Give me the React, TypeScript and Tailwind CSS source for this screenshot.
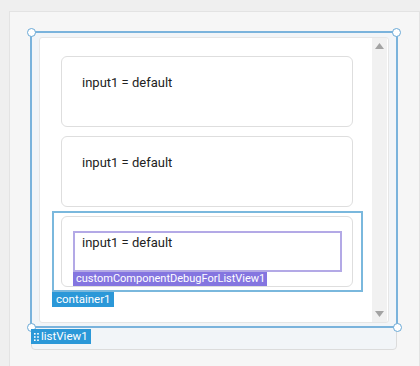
import React from "react";

function Card({ debug }: { debug?: boolean }) {
  return (
    <div className="w-[292px] h-[71px] shrink-0 rounded-md border border-[#dedede] bg-white pt-[14px] pl-[11px]">
      <div
        className={
          "w-[269px] h-[41px] text-[13px] leading-[16px] text-[#222] " +
          (debug ? "border-2 border-[#b3a9e6] pl-[7px] pt-[2px]" : "pl-[9px] pt-[4px]")
        }
      >
        input1 = default
      </div>
      {debug && (
        <div className="w-fit h-[14px] bg-[#8475e0] text-white text-[11px] leading-[14px] pl-[3px] pr-[2px] whitespace-nowrap">
          customComponentDebugForListView1
        </div>
      )}
    </div>
  );
}

function Handle({ x, y }: { x: number; y: number }) {
  return (
    <div
      className="absolute w-[9px] h-[9px] rounded-full bg-white border-[1.5px] border-[#6aa9d6]"
      style={{ left: x - 4.5, top: y - 4.5 }}
    />
  );
}

export default function App() {
  return (
    <div
      className="relative w-[420px] h-[366px] overflow-hidden bg-[#efefef]"
      style={{ fontFamily: "Roboto, 'Noto Sans', sans-serif" }}
    >
      <div className="ml-[9px] mt-[11px] h-[400px] bg-[#f6f6f6] border border-[#e3e3e3] pl-[21px] pt-[20px]">
        <div className="w-[366px] h-[318px] rounded-[4px] border border-[#dcdcdc] bg-[#f2f5f8] pl-[7px] pt-[4px]">
          <div className="flex w-[350px] h-[286px] bg-white rounded-[3px] border border-[#e6e6e6]">
            <div className="flex-1 flex flex-col gap-[9px] pl-[21px] pt-[18px] overflow-hidden">
              <Card />
              <Card />
              <Card debug />
            </div>
            <div className="w-[15px] mr-[1px] bg-[#f1f1f1] flex flex-col items-center justify-between pt-[5px] pb-[5px]">
              <svg width="9" height="6" viewBox="0 0 9 6">
                <polygon points="4.5,0 9,6 0,6" fill="#a3a3a3" />
              </svg>
              <svg width="9" height="6" viewBox="0 0 9 6">
                <polygon points="0,0 9,0 4.5,6" fill="#a3a3a3" />
              </svg>
            </div>
          </div>
        </div>
      </div>

      {/* container1 selection */}
      <div className="absolute left-[52px] top-[211px] w-[311px] h-[81px] border-2 border-[#7ab8dd]" />
      <div className="absolute left-[52px] top-[292px] h-[15px] pl-[4px] pr-[3px] whitespace-nowrap bg-[#2b98d8] text-white text-[11.5px] leading-[15px]">
        container1
      </div>

      {/* listView1 selection */}
      <div className="absolute left-[30px] top-[31px] w-[368px] h-[297px] border-2 border-[#7ab3dc]" />
      <Handle x={31} y={32} />
      <Handle x={396} y={32} />
      <Handle x={31} y={327} />
      <Handle x={397} y={327} />
      <div className="absolute left-[31px] top-[329px] h-[15px] pl-[3px] pr-[3px] flex items-center gap-[2px] whitespace-nowrap bg-[#2b98d8] text-white text-[11.5px] leading-[15px]">
        <svg width="5" height="8" viewBox="0 0 5 8">
          <rect x="0" y="0" width="1.6" height="1.6" fill="white" />
          <rect x="3.2" y="0" width="1.6" height="1.6" fill="white" />
          <rect x="0" y="3.2" width="1.6" height="1.6" fill="white" />
          <rect x="3.2" y="3.2" width="1.6" height="1.6" fill="white" />
          <rect x="0" y="6.4" width="1.6" height="1.6" fill="white" />
          <rect x="3.2" y="6.4" width="1.6" height="1.6" fill="white" />
        </svg>
        <span>listView1</span>
      </div>
    </div>
  );
}
